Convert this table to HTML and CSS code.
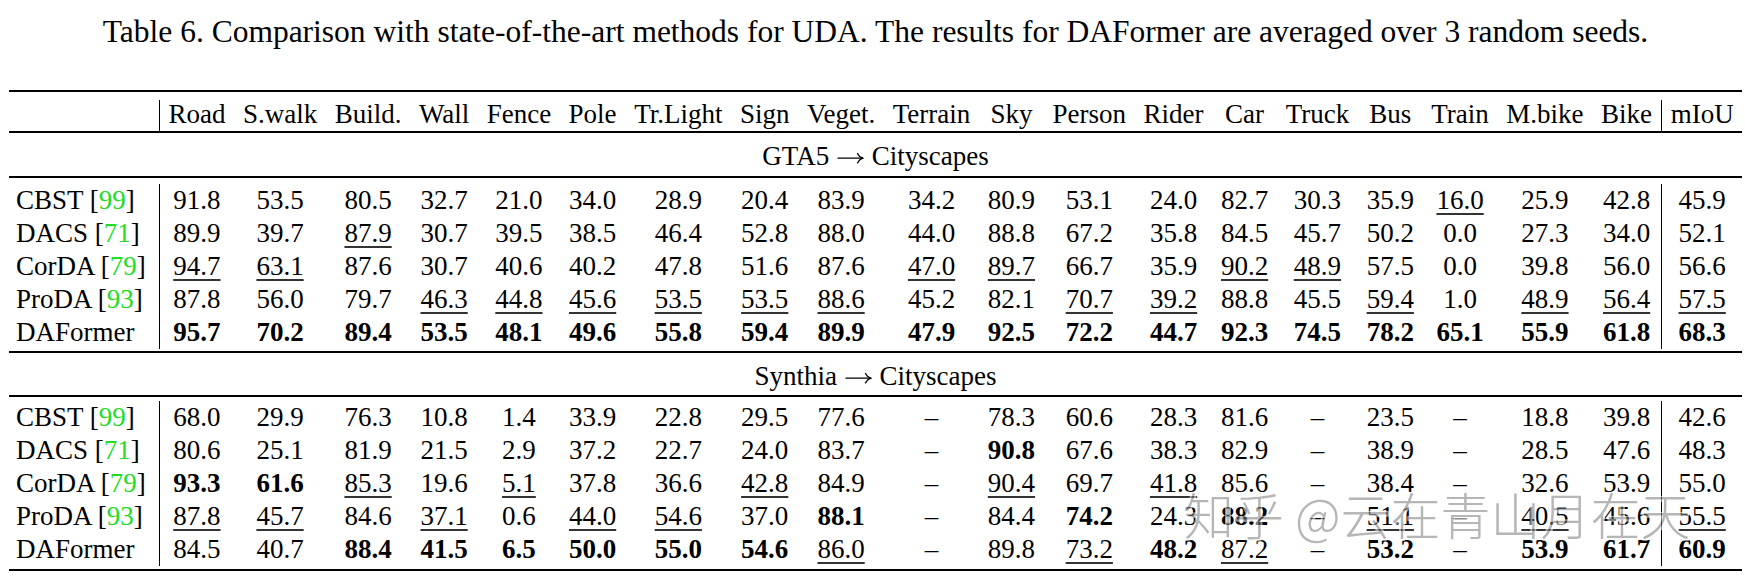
FILE: index.html
```html
<!DOCTYPE html>
<html>
<head>
<meta charset="utf-8">
<link rel="stylesheet" href="styles.css">
</head>
<body>
<div class="page">
  <p class="caption">Table 6. Comparison with state-of-the-art methods for UDA. The results for DAFormer are averaged over 3 random seeds.</p>
  <table class="tbl">
    <tbody>
      <tr class="top-rule"><td colspan="21"></td></tr>
      <tr class="head">
        <td class="m"></td>
        <td>Road</td><td>S.walk</td><td>Build.</td><td>Wall</td><td>Fence</td><td>Pole</td><td>Tr.Light</td><td>Sign</td><td>Veget.</td><td>Terrain</td><td>Sky</td><td>Person</td><td>Rider</td><td>Car</td><td>Truck</td><td>Bus</td><td>Train</td><td>M.bike</td><td class="last">Bike</td><td class="miou">mIoU</td>
      </tr>
      <tr class="section"><td colspan="21">GTA5 <svg class="arrow" viewBox="0 0 27 12" width="27" height="12" aria-hidden="true"><path d="M1 6.2 H25.5" /><path d="M20.5 1.5 Q22 5 25.8 6.2 Q22 7.4 20.5 10.9" /></svg> Cityscapes</td></tr>
      <tr class="gap first"><td colspan="21"></td></tr>
      <tr>
        <td class="m">CBST [<span class="ref">99</span>]</td>
        <td>91.8</td><td>53.5</td><td>80.5</td><td>32.7</td><td>21.0</td><td>34.0</td><td>28.9</td><td>20.4</td><td>83.9</td><td>34.2</td><td>80.9</td><td>53.1</td><td>24.0</td><td>82.7</td><td>30.3</td><td>35.9</td><td><span class="u">16.0</span></td><td>25.9</td><td class="last">42.8</td><td class="miou">45.9</td>
      </tr>
      <tr>
        <td class="m">DACS [<span class="ref">71</span>]</td>
        <td>89.9</td><td>39.7</td><td><span class="u">87.9</span></td><td>30.7</td><td>39.5</td><td>38.5</td><td>46.4</td><td>52.8</td><td>88.0</td><td>44.0</td><td>88.8</td><td>67.2</td><td>35.8</td><td>84.5</td><td>45.7</td><td>50.2</td><td>0.0</td><td>27.3</td><td class="last">34.0</td><td class="miou">52.1</td>
      </tr>
      <tr>
        <td class="m">CorDA [<span class="ref">79</span>]</td>
        <td><span class="u">94.7</span></td><td><span class="u">63.1</span></td><td>87.6</td><td>30.7</td><td>40.6</td><td>40.2</td><td>47.8</td><td>51.6</td><td>87.6</td><td><span class="u">47.0</span></td><td><span class="u">89.7</span></td><td>66.7</td><td>35.9</td><td><span class="u">90.2</span></td><td><span class="u">48.9</span></td><td>57.5</td><td>0.0</td><td>39.8</td><td class="last">56.0</td><td class="miou">56.6</td>
      </tr>
      <tr>
        <td class="m">ProDA [<span class="ref">93</span>]</td>
        <td>87.8</td><td>56.0</td><td>79.7</td><td><span class="u">46.3</span></td><td><span class="u">44.8</span></td><td><span class="u">45.6</span></td><td><span class="u">53.5</span></td><td><span class="u">53.5</span></td><td><span class="u">88.6</span></td><td>45.2</td><td>82.1</td><td><span class="u">70.7</span></td><td><span class="u">39.2</span></td><td>88.8</td><td>45.5</td><td><span class="u">59.4</span></td><td>1.0</td><td><span class="u">48.9</span></td><td class="last"><span class="u">56.4</span></td><td class="miou"><span class="u">57.5</span></td>
      </tr>
      <tr class="bold-row">
        <td class="m">DAFormer</td>
        <td>95.7</td><td>70.2</td><td>89.4</td><td>53.5</td><td>48.1</td><td>49.6</td><td>55.8</td><td>59.4</td><td>89.9</td><td>47.9</td><td>92.5</td><td>72.2</td><td>44.7</td><td>92.3</td><td>74.5</td><td>78.2</td><td>65.1</td><td>55.9</td><td class="last">61.8</td><td class="miou">68.3</td>
      </tr>
      <tr class="gap end"><td colspan="21"></td></tr>
      <tr class="section second"><td colspan="21">Synthia <svg class="arrow" viewBox="0 0 27 12" width="27" height="12" aria-hidden="true"><path d="M1 6.2 H25.5" /><path d="M20.5 1.5 Q22 5 25.8 6.2 Q22 7.4 20.5 10.9" /></svg> Cityscapes</td></tr>
      <tr class="gap first second"><td colspan="21"></td></tr>
      <tr>
        <td class="m">CBST [<span class="ref">99</span>]</td>
        <td>68.0</td><td>29.9</td><td>76.3</td><td>10.8</td><td>1.4</td><td>33.9</td><td>22.8</td><td>29.5</td><td>77.6</td><td>–</td><td>78.3</td><td>60.6</td><td>28.3</td><td>81.6</td><td>–</td><td>23.5</td><td>–</td><td>18.8</td><td class="last">39.8</td><td class="miou">42.6</td>
      </tr>
      <tr>
        <td class="m">DACS [<span class="ref">71</span>]</td>
        <td>80.6</td><td>25.1</td><td>81.9</td><td>21.5</td><td>2.9</td><td>37.2</td><td>22.7</td><td>24.0</td><td>83.7</td><td>–</td><td class="b">90.8</td><td>67.6</td><td>38.3</td><td>82.9</td><td>–</td><td>38.9</td><td>–</td><td>28.5</td><td class="last">47.6</td><td class="miou">48.3</td>
      </tr>
      <tr>
        <td class="m">CorDA [<span class="ref">79</span>]</td>
        <td class="b">93.3</td><td class="b">61.6</td><td><span class="u">85.3</span></td><td>19.6</td><td><span class="u">5.1</span></td><td>37.8</td><td>36.6</td><td><span class="u">42.8</span></td><td>84.9</td><td>–</td><td><span class="u">90.4</span></td><td>69.7</td><td><span class="u">41.8</span></td><td>85.6</td><td>–</td><td>38.4</td><td>–</td><td>32.6</td><td class="last">53.9</td><td class="miou">55.0</td>
      </tr>
      <tr>
        <td class="m">ProDA [<span class="ref">93</span>]</td>
        <td><span class="u">87.8</span></td><td><span class="u">45.7</span></td><td>84.6</td><td><span class="u">37.1</span></td><td>0.6</td><td><span class="u">44.0</span></td><td><span class="u">54.6</span></td><td>37.0</td><td class="b">88.1</td><td>–</td><td>84.4</td><td class="b">74.2</td><td>24.3</td><td class="b">88.2</td><td>–</td><td><span class="u">51.1</span></td><td>–</td><td><span class="u">40.5</span></td><td class="last">45.6</td><td class="miou"><span class="u">55.5</span></td>
      </tr>
      <tr>
        <td class="m">DAFormer</td>
        <td>84.5</td><td>40.7</td><td class="b">88.4</td><td class="b">41.5</td><td class="b">6.5</td><td class="b">50.0</td><td class="b">55.0</td><td class="b">54.6</td><td><span class="u">86.0</span></td><td>–</td><td>89.8</td><td><span class="u">73.2</span></td><td class="b">48.2</td><td><span class="u">87.2</span></td><td>–</td><td class="b">53.2</td><td>–</td><td class="b">53.9</td><td class="last b">61.7</td><td class="miou b">60.9</td>
      </tr>
      <tr class="gap bottom"><td colspan="21"></td></tr>
    </tbody>
  </table>
  <div class="watermark">知乎 @云在青山月在天</div>
</div>
</body>
</html>
```

FILE: styles.css
```css
html, body {
  margin: 0;
  padding: 0;
  background: #ffffff;
}

body {
  font-family: "Liberation Serif", "Times New Roman", serif;
  color: #000000;
}

.page {
  position: relative;
  width: 1745px;
  height: 585px;
  overflow: hidden;
}

.caption {
  margin: 15px 0 0 9px;
  width: 1733px;
  text-align: center;
  font-size: 31.5px;
  line-height: 34px;
}

.tbl {
  margin: 41px 0 0 9px;
  width: 1733px;
  border-collapse: separate;
  border-spacing: 0;
  font-size: 27px;
}

.tbl td {
  padding: 0 8.5px;
  line-height: 33px;
  height: 33px;
  text-align: center;
  white-space: nowrap;
  box-sizing: border-box;
}

.tbl td.m {
  text-align: left;
  padding-left: 7px;
  padding-right: 12px;
  border-right: 1px solid #000;
}

.tbl td.last {
  border-right: 1px solid #000;
}

.tbl td.miou {
  padding-right: 8px;
}

.tbl .top-rule td {
  border-top: 2px solid #000;
  height: 10px;
  line-height: 0;
  padding: 0;
}

.tbl .head td {
  line-height: 29px;
  height: 31px;
  padding-bottom: 2px;
}

.tbl .section td {
  border-top: 2px solid #000;
  padding-top: 7px;
  padding-bottom: 3px;
  height: 45px;
}

.tbl .section.second td {
  padding-bottom: 2px;
  height: 44px;
}

.arrow {
  display: inline-block;
  width: 27px;
  height: 12px;
  vertical-align: 1px;
  margin: 0 1px;
  fill: none;
  stroke: #000;
  stroke-width: 1.3;
  stroke-linecap: round;
}

.tbl .gap td {
  padding: 0;
  line-height: 0;
  font-size: 0;
}

.tbl .gap.first td {
  border-top: 2px solid #000;
  height: 8px;
}

.tbl .gap.first.second td {
  height: 6px;
}

.tbl .gap.end td {
  height: 2px;
}

.tbl .gap.bottom td {
  height: 5px;
  border-bottom: 2px solid #000;
}

.bold-row td:not(.m),
.tbl td.b {
  font-weight: bold;
}

.u {
  text-decoration: underline;
  text-decoration-thickness: 1.5px;
  text-underline-offset: 4px;
  text-decoration-color: #333;
}

.ref {
  color: #22dd22;
}

.watermark {
  position: absolute;
  left: 1184px;
  top: 487px;
  font-family: "Noto Sans CJK SC", "Noto Sans", sans-serif;
  font-size: 50px;
  font-weight: 300;
  line-height: 52px;
  white-space: nowrap;
  color: #7c7c7c;
  opacity: 0.55;
  text-shadow:
    1.5px 0 0 #fff, -1.5px 0 0 #fff, 0 1.5px 0 #fff, 0 -1.5px 0 #fff,
    1.5px 1.5px 0 #fff, -1.5px -1.5px 0 #fff, 1.5px -1.5px 0 #fff, -1.5px 1.5px 0 #fff;
}
```
